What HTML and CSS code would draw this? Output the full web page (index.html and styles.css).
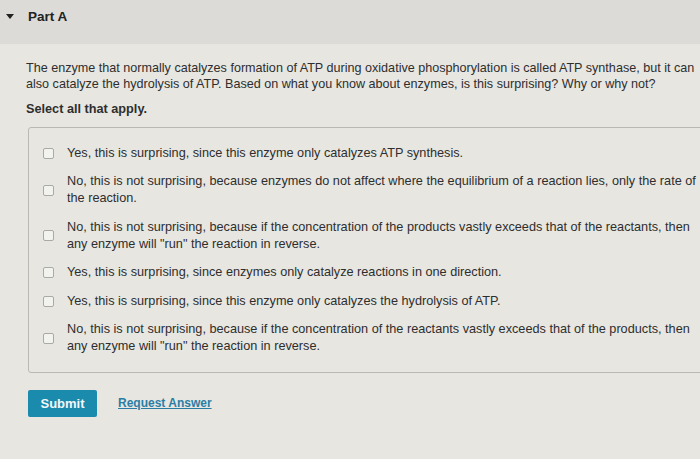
FILE: index.html
```html
<!DOCTYPE html>
<html lang="en">
<head>
	<meta charset="UTF-8">
	<title>Part A</title>
	<link rel="stylesheet" href="styles.css">
</head>
<body>
	<div class="part-header">
		<span class="caret"></span>
		<h2>Part A</h2>
	</div>

	<div class="part-body">
		<p class="question">The enzyme that normally catalyzes formation of ATP during oxidative phosphorylation is called ATP synthase, but it can<br>also catalyze the hydrolysis of ATP. Based on what you know about enzymes, is this surprising? Why or why not?</p>
		<p class="hint">Select all that apply.</p>

		<ul class="options">
			<li><span class="box"></span><span class="label">Yes, this is surprising, since this enzyme only catalyzes ATP synthesis.</span></li>
			<li><span class="box"></span><span class="label">No, this is not surprising, because enzymes do not affect where the equilibrium of a reaction lies, only the rate of the reaction.</span></li>
			<li><span class="box"></span><span class="label">No, this is not surprising, because if the concentration of the products vastly exceeds that of the reactants, then any enzyme will "run" the reaction in reverse.</span></li>
			<li><span class="box"></span><span class="label">Yes, this is surprising, since enzymes only catalyze reactions in one direction.</span></li>
			<li><span class="box"></span><span class="label">Yes, this is surprising, since this enzyme only catalyzes the hydrolysis of ATP.</span></li>
			<li><span class="box"></span><span class="label">No, this is not surprising, because if the concentration of the reactants vastly exceeds that of the products, then any enzyme will "run" the reaction in reverse.</span></li>
		</ul>

		<div class="actions">
			<a href="javascript:void(0);" class="btn-submit">Submit</a>
			<a href="javascript:void(0);" class="request">Request Answer</a>
		</div>
	</div>
</body>
</html>
```

FILE: styles.css
```css
*{
	margin: 0;
	padding: 0;
	box-sizing: border-box;
}
html, body {
	height: 100%;
}
body {
	background: #e7e6e1;
	font-family: "Liberation Sans", Arial, sans-serif;
	color: #2e2e2e;
	overflow: hidden;
}
ul li{
	list-style: none;
}
a{
	text-decoration: none;
}
.part-header {
	display: flex;
	align-items: center;
	height: 44px;
	padding: 0 0 12px 6px;
	background: #dcdbd7;
}
.caret {
	width: 0;
	height: 0;
	border-left: 4px solid transparent;
	border-right: 4px solid transparent;
	border-top: 5px solid #222;
	margin-right: 14px;
}
.part-header h2 {
	font-size: 13.5px;
	font-weight: bold;
	color: #222;
}
.part-body {
	padding: 16px 0 0 26px;
}
.question {
	font-size: 12.6px;
	line-height: 16px;
	white-space: nowrap;
}
.hint {
	margin-top: 9px;
	font-size: 12.7px;
	font-weight: bold;
	line-height: 16px;
}
.options {
	margin: 10px -20px 0 2px;
	padding: 16.5px 0 16.5px 14px;
	border: 1px solid #b9b8b3;
	border-radius: 3px;
	display: flex;
	flex-direction: column;
	gap: 11.6px;
}
.options li {
	display: flex;
	align-items: center;
	gap: 13px;
	font-size: 12.7px;
	line-height: 17px;
}
.box {
	flex: none;
	width: 11px;
	height: 11px;
	border: 1px solid #a9a9a6;
	border-radius: 2px;
	background: #f2f2ef;
}
.label {
	width: 636px;
}
.actions {
	display: flex;
	align-items: center;
	gap: 21px;
	margin: 17px 0 0 2px;
}
.btn-submit {
	display: block;
	width: 69px;
	height: 27px;
	line-height: 27px;
	text-align: center;
	background: #1a8aad;
	border-radius: 2px;
	color: #f4f8fa;
	font-size: 13px;
	font-weight: bold;
}
.request {
	color: #2a7ea5;
	font-size: 12px;
	font-weight: bold;
	text-decoration: underline;
}
```
